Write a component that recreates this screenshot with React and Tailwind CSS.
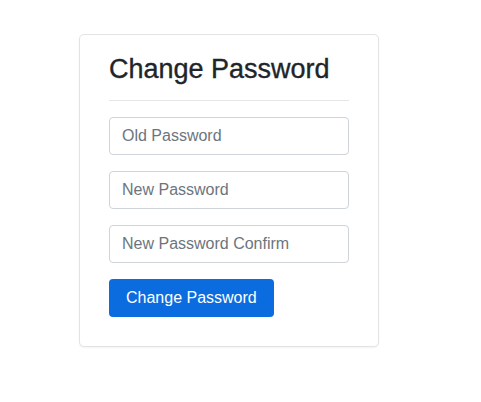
import React from 'react';

const fields = ['Old Password', 'New Password', 'New Password Confirm'];

const App = () => {
  return (
    <div className="min-h-[402px] bg-white pt-[34px] pl-[79px] font-['Liberation_Sans',Arial,sans-serif]">
      <div className="w-[300px] rounded-[5px] border border-[#e3e3e3] bg-white px-[29px] pt-[18px] pb-[29px] shadow-[0_1px_2px_rgba(0,0,0,0.05)]">
        <h3 className="text-[27px] leading-[32px] font-medium text-[#212529] [-webkit-text-stroke:0.35px_#212529]">Change Password</h3>
        <div className="mt-[15px] mb-4 h-px bg-[#e5e5e5]" />
        <form className="flex flex-col gap-4" onSubmit={(e) => e.preventDefault()}>
          {fields.map((label) => (
            <input
              key={label}
              type="password"
              placeholder={label}
              className="h-[38px] w-full rounded-[4px] border border-[#ced4da] px-3 text-base text-[#495057] placeholder-[#6c757d] outline-none"
            />
          ))}
          <div>
            <button
              type="submit"
              className="h-[38px] rounded-[4px] bg-[#0a6cdf] px-[17px] text-base text-white"
            >
              Change Password
            </button>
          </div>
        </form>
      </div>
    </div>
  );
};

export default App;
